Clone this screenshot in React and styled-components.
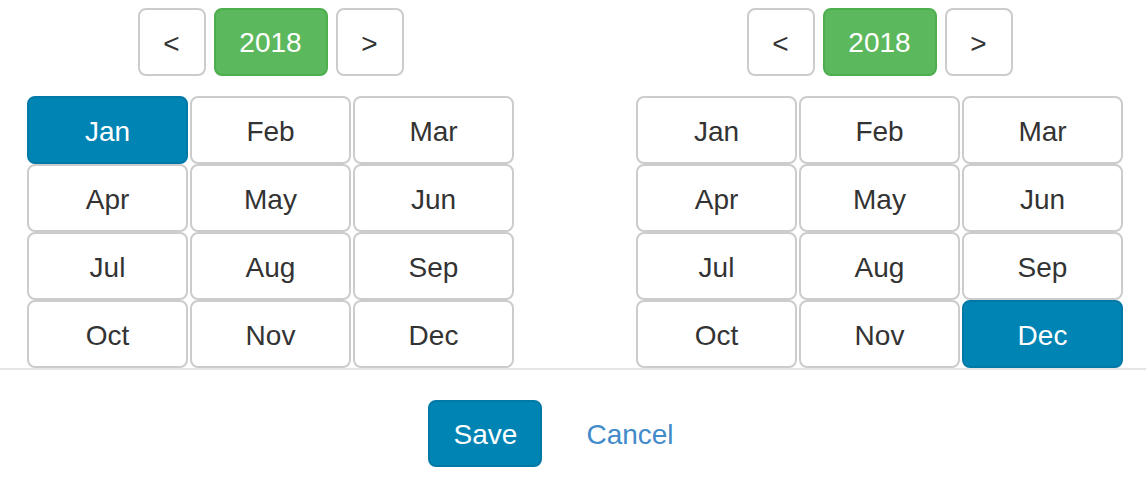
import React, { useState } from 'react';
import styled, { createGlobalStyle } from 'styled-components';

const GlobalStyle = createGlobalStyle`
  body {
    margin: 0;
    background: #fff;
    font-family: "Liberation Sans", Arial, Helvetica, sans-serif;
    color: #333;
  }
`;

const Wrapper = styled.div`
  width: 1146px;
`;

const Panels = styled.div`
  display: flex;
  gap: 122px;
  padding-left: 27px;
`;

const Panel = styled.div`
  width: 487px;
  display: flex;
  flex-direction: column;
  align-items: center;
`;

const NavRow = styled.div`
  display: flex;
  gap: 8px;
  padding-top: 8px;
  margin-bottom: 20px;
`;

const Btn = styled.button`
  box-sizing: border-box;
  height: 68px;
  padding: 3px 24px 0;
  font-family: inherit;
  font-size: 28px;
  line-height: 40px;
  border-radius: 8px;
  border: 2px solid #ccc;
  background: #fff;
  color: #333;
  cursor: pointer;
`;

const NavBtn = styled(Btn)`
  width: 68px;
  padding: 4px 0 0;
`;

const YearBtn = styled(Btn)`
  width: 114px;
  padding: 2px 0 0;
  background: #5cb85c;
  border-color: #4cae4c;
  color: #fff;
`;

const MonthGrid = styled.div`
  width: 100%;
  display: grid;
  grid-template-columns: repeat(3, 1fr);
  grid-auto-rows: 68px;
  column-gap: 2px;
`;

const MonthBtn = styled(Btn)`
  width: 100%;
  padding: 3px 0 0;
  background: ${({ $active }) => ($active ? '#0084b4' : '#fff')};
  border-color: ${({ $active }) => ($active ? '#0079a6' : '#ccc')};
  color: ${({ $active }) => ($active ? '#fff' : '#333')};
`;

const Divider = styled.div`
  height: 2px;
  background: #e5e5e5;
`;

const Footer = styled.div`
  display: flex;
  justify-content: center;
  align-items: center;
  padding: 30px 20px 0 0;
`;

const SaveBtn = styled(Btn)`
  width: 114px;
  height: 67px;
  padding: 3px 0 0;
  background: #0084b4;
  border-color: #0079a6;
  color: #fff;
`;

const CancelLink = styled.button`
  margin-left: 20px;
  padding: 3px 24px 0;
  height: 67px;
  border: none;
  background: none;
  font-family: inherit;
  font-size: 28px;
  color: #428bca;
  cursor: pointer;
`;

const MONTHS = ['Jan', 'Feb', 'Mar', 'Apr', 'May', 'Jun', 'Jul', 'Aug', 'Sep', 'Oct', 'Nov', 'Dec'];

const MonthPicker = ({ year, selected, onYear, onSelect }) => (
  <Panel>
    <NavRow>
      <NavBtn onClick={() => onYear(year - 1)}>&lt;</NavBtn>
      <YearBtn>{year}</YearBtn>
      <NavBtn onClick={() => onYear(year + 1)}>&gt;</NavBtn>
    </NavRow>
    <MonthGrid>
      {MONTHS.map((m, i) => (
        <MonthBtn key={m} $active={i === selected} onClick={() => onSelect(i)}>
          {m}
        </MonthBtn>
      ))}
    </MonthGrid>
  </Panel>
);

const App = () => {
  const [fromYear, setFromYear] = useState(2018);
  const [toYear, setToYear] = useState(2018);
  const [from, setFrom] = useState(0);
  const [to, setTo] = useState(11);

  return (
    <Wrapper>
      <GlobalStyle />
      <Panels>
        <MonthPicker year={fromYear} selected={from} onYear={setFromYear} onSelect={setFrom} />
        <MonthPicker year={toYear} selected={to} onYear={setToYear} onSelect={setTo} />
      </Panels>
      <Divider />
      <Footer>
        <SaveBtn>Save</SaveBtn>
        <CancelLink>Cancel</CancelLink>
      </Footer>
    </Wrapper>
  );
};

export default App;
